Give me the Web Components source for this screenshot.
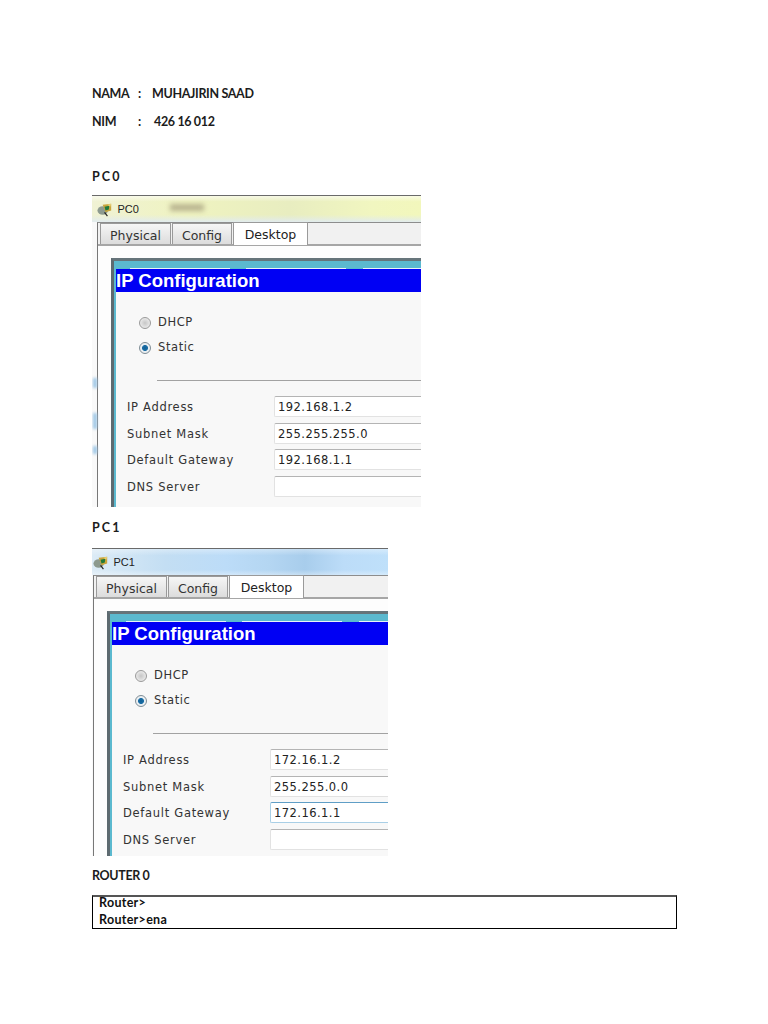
<!DOCTYPE html>
<html>
<head>
<meta charset="utf-8">
<title>PC config</title>
<style>
  html, body { margin: 0; background: #fff; }
  body { font-family: Lato, "Liberation Sans", sans-serif; color: #1a1a1a; }
</style>
</head>
<body>
<doc-page>
  <doc-line style="margin-top:84px"><span style="display:inline-block;width:46px">NAMA</span><span style="display:inline-block;width:14px">:</span>MUHAJIRIN SAAD</doc-line>
  <doc-line style="margin-top:10px"><span style="display:inline-block;width:46px">NIM</span><span style="display:inline-block;width:16px">:</span>426 16 012</doc-line>
  <doc-line style="margin-top:37px">P C 0</doc-line>
  <pc-window name="PC0" theme="yellow" style="margin-top:10px">
    <ip-field label="IP Address">192.168.1.2</ip-field>
    <ip-field label="Subnet Mask">255.255.255.0</ip-field>
    <ip-field label="Default Gateway">192.168.1.1</ip-field>
    <ip-field label="DNS Server"></ip-field>
  </pc-window>
  <doc-line style="margin-top:11px">P C 1</doc-line>
  <pc-window name="PC1" theme="blue" style="margin-top:12px">
    <ip-field label="IP Address">172.16.1.2</ip-field>
    <ip-field label="Subnet Mask">255.255.0.0</ip-field>
    <ip-field label="Default Gateway" focused>172.16.1.1</ip-field>
    <ip-field label="DNS Server"></ip-field>
  </pc-window>
  <doc-line style="margin-top:10px">ROUTER 0</doc-line>
  <cmd-box style="margin-top:11px">Router&gt;
Router&gt;ena</cmd-box>
</doc-page>

<script>
  function shadow(el, html) {
    el.attachShadow({ mode: "open" }).innerHTML = html
  }

  class DocPage extends HTMLElement {
    constructor() {
      super()
      shadow(this, `<style>
        :host { display: block; width: 768px; height: 1024px; padding-left: 92px; box-sizing: border-box; overflow: hidden; }
      </style><slot></slot>`)
    }
  }

  class DocLine extends HTMLElement {
    constructor() {
      super()
      shadow(this, `<style>
        :host { display: block; height: 18px; font: 700 12.5px/20px Lato, "Liberation Sans", sans-serif; letter-spacing: -.35px; color: #1c1c1c; white-space: pre; }
      </style><slot></slot>`)
    }
  }

  class CmdBox extends HTMLElement {
    constructor() {
      super()
      shadow(this, `<style>
        :host { display: block; width: 585px; height: 34px; box-sizing: border-box; border: 1px solid #000; border-top: 2px solid #555; padding: 0 6px; font: 700 12.5px/16.5px Lato, "Liberation Sans", sans-serif; letter-spacing: .3px; color: #111; white-space: pre; overflow: hidden; }
        div { margin-top: -2px; }
      </style><div><slot></slot></div>`)
    }
  }

  class IpField extends HTMLElement {
    constructor() {
      super()
      const label = this.getAttribute("label")
      shadow(this, `<style>
        :host { display: flex; height: 21px; font: 11.5px/22px "DejaVu Sans", sans-serif; color: #333; }
        .label { width: 147px; flex: none; letter-spacing: .7px; }
        .box { flex: 1; box-sizing: border-box; background: #fff; border: 1px solid #e2e2e2; border-top: 1px solid #b4b4b4; border-right: 0; border-radius: 2px 0 0 2px; padding-left: 3px; line-height: 20px; letter-spacing: .45px; color: #222; }
        :host([focused]) .box { border-color: #a9cfe6; border-top-color: #5f9ec6; }
      </style><div class="label">${label}</div><div class="box"><slot></slot></div>`)
    }
  }

  class PcWindow extends HTMLElement {
    constructor() {
      super()
      const name = this.getAttribute("name")
      const blue = this.getAttribute("theme") == "blue"
      shadow(this, `<style>
        :host { display: block; overflow: hidden; box-sizing: border-box; width: ${blue ? 296 : 329}px; height: ${blue ? 308 : 312}px; border-top: 1px solid #6a6a6a; background: #f9f9f9; position: relative; }
        .title { height: 26px; display: flex; align-items: center; gap: 2.5px; padding-left: ${blue ? 1 : 5}px; box-sizing: border-box; font: 11px "Liberation Sans", sans-serif; color: #222; position: relative;
          background: ${blue
            ? "linear-gradient(180deg,rgba(255,255,255,.35) 0,rgba(255,255,255,0) 25%,rgba(255,255,255,0) 80%,rgba(255,255,255,.35) 100%),linear-gradient(90deg,#dcebf6 0,#c3def3 25%,#bcdcf8 45%,#b4d6f2 60%,#a8cdec 72%,#bcdcf8 85%,#bfe0fa 100%)"
            : "linear-gradient(180deg,rgba(255,255,255,.6) 0,rgba(255,255,255,0) 22%,rgba(255,255,255,0) 72%,rgba(225,235,240,.95) 100%),linear-gradient(90deg,#f0f2d4 0,#eff3c0 30%,#e8edc0 60%,#f1f6c0 85%,#f2f7bc 100%)"}; }
        .smudge { position: absolute; left: 78px; top: 8px; width: 34px; height: 7px; background: #b9b48f; filter: blur(2.5px); }
        .mark { position: absolute; left: 1px; width: 4px; background: #9cc6e6; filter: blur(1.5px); }
        .body { height: 285px; margin-left: ${blue ? 1 : 5}px; border-left: 1px solid #777; border-top: 1px solid #8d8d8d; background: #fdfdfd; display: flex; flex-direction: column; }
        .tabs { display: flex; height: 21px; padding-left: 2px; border-bottom: 2px solid #a6a6a6; box-sizing: content-box; font: 12.5px/23px "DejaVu Sans", sans-serif; color: #333; background: #f1f1f1; flex: none; }
        .tab { box-sizing: border-box; text-align: center; height: 21px; background: linear-gradient(#f6f6f6,#dcdcdc); border: 1px solid #9a9a9a; border-bottom: 0; margin-right: 1px; }
        .tab.on { background: #fff; height: 23px; margin-top: -1px; position: relative; color: #222; line-height: 23px; }
        .frame { margin: 12px 0 0 13px; flex: 1; border-left: 3px solid #5d6a70; border-top: 3px solid #66747a; background: #5bb9cf; padding: 8px 0 0 2px; position: relative; overflow: hidden; }
        .notch { position: absolute; top: 7px; height: 1px; background: #e8f4f7; }
        .head { height: 23px; background: #0000f4; color: #fff; font: 700 18.5px/24px "Liberation Sans", sans-serif; white-space: nowrap; }
        .panel { background: #f8f8f8; height: 218px; padding: 22px 0 0 23px; box-sizing: border-box; font: 11.5px/17px "DejaVu Sans", sans-serif; letter-spacing: .6px; color: #333; }
        .radio { display: flex; align-items: center; gap: 7px; height: 17px; margin-bottom: 8px; }
        .dot { width: 12px; height: 12px; border-radius: 50%; box-sizing: border-box; border: 1px solid #9a9a9a; background: radial-gradient(circle at 50% 50%,#c6c6c6 0,#e8e8e8 70%,#f4f4f4 100%); flex: none; }
        .dot.on { background: radial-gradient(circle,#0f5f95 0,#1d6fa6 38%,#e8eef2 46%,#f2f2f2 100%); border-color: #7f8d96; }
        hr { border: 0; height: 1px; background: #a2a2a2; margin: 24px 0 15px 18px; }
        .fields { display: flex; flex-direction: column; gap: 5.5px; margin-left: -12px; }
      </style>
      <div class="title">
        <svg width="18" height="17" viewBox="0 0 19 16">
          <ellipse cx="6" cy="9" rx="5.5" ry="4.5" fill="#8d9a8f"/>
          <path d="M6 3 L15 2 L15 9 L9 11 Z" fill="#c9a53c"/>
          <path d="M8 5 L13 4 L12.5 8 L9 9 Z" fill="#1f7a3a"/>
          <path d="M11 3 L15 2 L14 5 Z" fill="#e8d27a"/>
          <path d="M8 11 L11 15" stroke="#222" stroke-width="1.3" fill="none"/>
        </svg>
        <span>${name}</span>
        ${blue ? "" : '<div class="smudge"></div>'}
      </div>
      ${blue ? "" : '<div class="mark" style="top:182px;height:10px"></div><div class="mark" style="top:217px;height:16px"></div><div class="mark" style="top:250px;height:8px"></div>'}
      <div class="body">
        <div class="tabs">
          <div class="tab" style="width:71px">Physical</div>
          <div class="tab" style="width:60px">Config</div>
          <div class="tab on" style="width:75px">Desktop</div>
        </div>
        <div class="frame">
          <div class="notch" style="left:16px;width:100px"></div>
          <div class="notch" style="left:132px;width:100px"></div>
          <div class="notch" style="left:249px;width:100px"></div>
          <div class="head">IP Configuration</div>
          <div class="panel">
            <div class="radio"><span class="dot"></span>DHCP</div>
            <div class="radio"><span class="dot on"></span>Static</div>
            <hr>
            <div class="fields"><slot></slot></div>
          </div>
        </div>
      </div>`)
    }
  }

  customElements.define("doc-page", DocPage)
  customElements.define("doc-line", DocLine)
  customElements.define("cmd-box", CmdBox)
  customElements.define("ip-field", IpField)
  customElements.define("pc-window", PcWindow)
</script>
</body>
</html>
